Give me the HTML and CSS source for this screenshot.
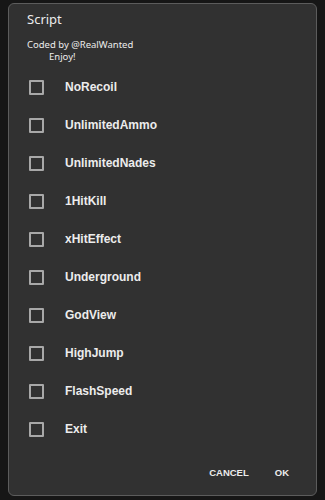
FILE: index.html
```html
<!DOCTYPE html>
<html lang="en">
<head>
    <meta charset="UTF-8">
    <meta name="viewport" content="width=device-width, initial-scale=1.0">
    <title>Script</title>
    <link rel="stylesheet" href="styles.css">
</head>
<body>
    <div class="dialog">
        <div class="title">Script</div>
        <div class="message">
            <div>Coded by @RealWanted</div>
            <div class="enjoy">Enjoy!</div>
        </div>
        <ul class="options">
            <li><span class="box"></span>NoRecoil</li>
            <li><span class="box"></span>UnlimitedAmmo</li>
            <li><span class="box"></span>UnlimitedNades</li>
            <li><span class="box"></span>1HitKill</li>
            <li><span class="box"></span>xHitEffect</li>
            <li><span class="box"></span>Underground</li>
            <li><span class="box"></span>GodView</li>
            <li><span class="box"></span>HighJump</li>
            <li><span class="box"></span>FlashSpeed</li>
            <li><span class="box"></span>Exit</li>
        </ul>
        <div class="buttons">
            <button class="btn">CANCEL</button>
            <button class="btn">OK</button>
        </div>
    </div>
</body>
</html>
```

FILE: styles.css
```css
body {
    margin: 0;
    padding: 3px 8px 0 8px;
    background-color: #161616;
    font-family: "Noto Sans", sans-serif;
    color: #ececec;
}
.dialog {
    height: 493px;
    box-sizing: border-box;
    background-color: #313131;
    border: 1px solid #5c5c5c;
    border-radius: 6px;
    padding: 6px 0 0 0;
    display: flex;
    flex-direction: column;
}
.title {
    font-size: 13px;
    padding-left: 18px;
    height: 29px;
    line-height: 18px;
}
.message {
    font-size: 9.5px;
    line-height: 12px;
    padding-left: 18px;
    height: 29px;
}
.enjoy {
    padding-left: 22px;
}
.options {
    list-style: none;
    margin: 0;
    padding: 0;
}
.options li {
    height: 38px;
    display: flex;
    align-items: center;
    font-family: "Liberation Sans", Arial, sans-serif;
    font-weight: bold;
    font-size: 12px;
    padding-left: 20px;
}
.box {
    width: 11px;
    height: 11px;
    border: 2px solid #a8a8a8;
    border-radius: 1px;
    margin-right: 21px;
}
.buttons {
    display: flex;
    justify-content: flex-end;
    gap: 8px;
    padding: 15px 18px 0 0;
}
.btn {
    background: none;
    border: none;
    color: #ececec;
    font-family: "Liberation Sans", Arial, sans-serif;
    font-weight: bold;
    font-size: 9.5px;
    padding: 4px 9px;
}
```
